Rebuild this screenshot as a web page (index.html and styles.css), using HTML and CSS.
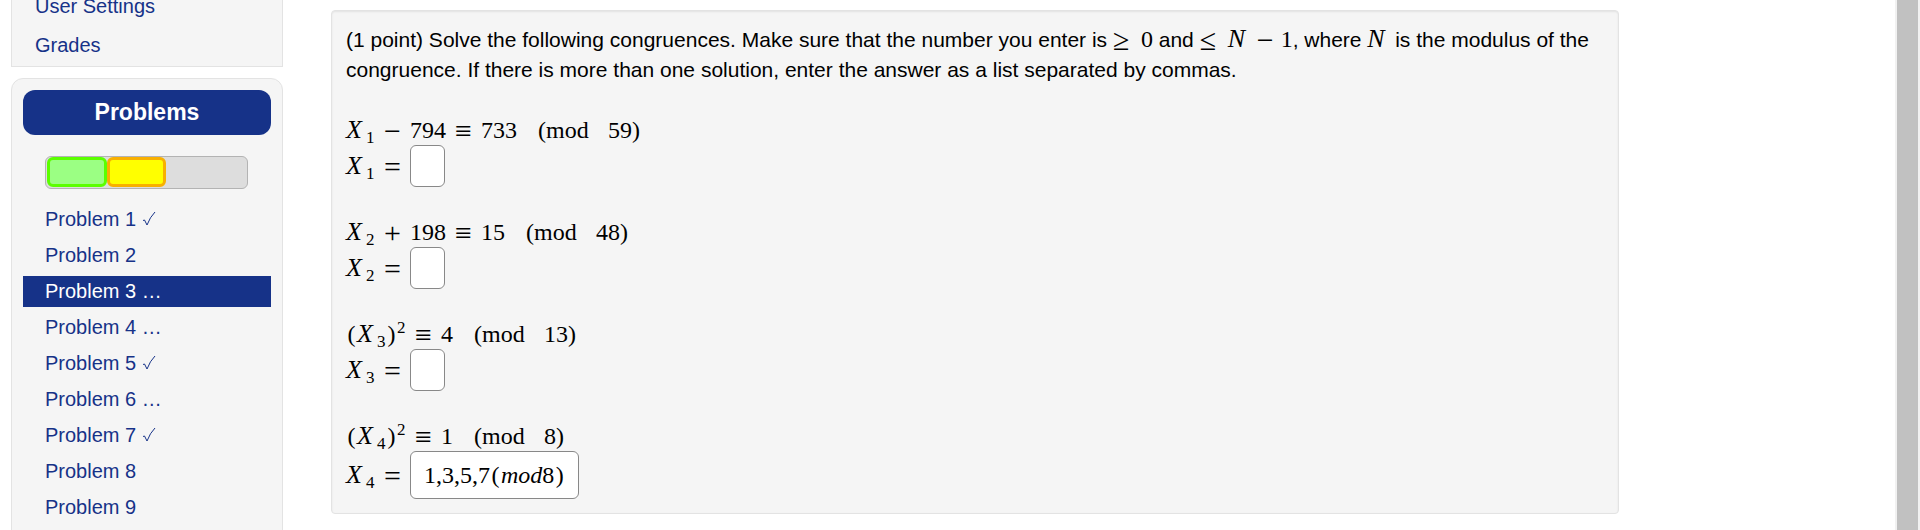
FILE: index.html
```html
<!DOCTYPE html>
<html lang="en">
<head>
<meta charset="utf-8">
<title>Problem 3</title>
<link rel="stylesheet" href="styles.css">
</head>
<body>
<div class="page">
  <aside class="sidebar">
    <nav class="panel menu" aria-label="Main menu">
      <a href="#">User Settings</a>
      <a href="#">Grades</a>
    </nav>
    <nav class="panel problems" aria-label="Problems">
      <h2 class="panel-title">Problems</h2>
      <div class="progress"><span class="done"></span><span class="partial"></span></div>
      <ul class="problem-list">
        <li><a href="#">Problem 1 <svg class="check" viewBox="0 0 14 16"><path d="M1 9.5 2.5 9 5 14Q8 6 13 1"/></svg></a></li>
        <li><a href="#">Problem 2</a></li>
        <li><a href="#" class="active">Problem 3 …</a></li>
        <li><a href="#">Problem 4 …</a></li>
        <li><a href="#">Problem 5 <svg class="check" viewBox="0 0 14 16"><path d="M1 9.5 2.5 9 5 14Q8 6 13 1"/></svg></a></li>
        <li><a href="#">Problem 6 …</a></li>
        <li><a href="#">Problem 7 <svg class="check" viewBox="0 0 14 16"><path d="M1 9.5 2.5 9 5 14Q8 6 13 1"/></svg></a></li>
        <li><a href="#">Problem 8</a></li>
        <li><a href="#">Problem 9</a></li>
      </ul>
    </nav>
  </aside>
  <main class="content">
    <form class="problem">
      <p class="statement">(1 point) Solve the following congruences. Make sure that the number you enter is <span class="math"><span class="cmp">≥</span>0</span> and <span class="math"><span class="cmp">≤</span><i class="var">N</i><span class="minus">−</span>1</span>, where <span class="math"><i class="var">N</i></span> is the modulus of the congruence. If there is more than one solution, enter the answer as a list separated by commas.</p>

      <div class="question">
        <div class="math equation"><i class="var">X</i><sub>1</sub><span class="op">−</span>794<span class="op">≡</span>733<span class="mod">(<span class="word">mod</span>59)</span></div>
        <div class="answer"><label class="math" for="x1"><i class="var">X</i><sub>1</sub><span class="op">=</span></label><input class="math field" id="x1" type="text"></div>
      </div>
      <div class="question">
        <div class="math equation"><i class="var">X</i><sub>2</sub><span class="op">+</span>198<span class="op">≡</span>15<span class="mod">(<span class="word">mod</span>48)</span></div>
        <div class="answer"><label class="math" for="x2"><i class="var">X</i><sub>2</sub><span class="op">=</span></label><input class="math field" id="x2" type="text"></div>
      </div>
      <div class="question">
        <div class="math equation"><span class="paren">(</span><i class="var">X</i><sub>3</sub><span class="paren">)</span><sup>2</sup><span class="op">≡</span>4<span class="mod">(<span class="word">mod</span>13)</span></div>
        <div class="answer"><label class="math" for="x3"><i class="var">X</i><sub>3</sub><span class="op">=</span></label><input class="math field" id="x3" type="text"></div>
      </div>
      <div class="question">
        <div class="math equation"><span class="paren">(</span><i class="var">X</i><sub>4</sub><span class="paren">)</span><sup>2</sup><span class="op">≡</span>1<span class="mod">(<span class="word">mod</span>8)</span></div>
        <div class="answer"><span class="math" id="x4-label"><i class="var">X</i><sub>4</sub><span class="op">=</span></span><span class="math field filled" role="textbox" contenteditable="true" aria-labelledby="x4-label">1,3,5,7<span class="paren">(</span><i>mod</i>8<span class="paren">)</span></span></div>
      </div>
    </form>
  </main>
  <div class="scrollbar"></div>
</div>
</body>
</html>
```
FILE: styles.css
```css
* { box-sizing: border-box; }

body {
  margin: 0;
  background: #fff;
  color: #000;
  font-family: "Liberation Sans", Arial, sans-serif;
  font-size: 20px;
  line-height: 30px;
}

.page {
  display: grid;
  grid-template-columns: 272px minmax(0, 1fr) 25px;
  column-gap: 48px;
  height: 100vh;
  padding-left: 11px;
  overflow: hidden;
}

.sidebar {
  display: flex;
  flex-direction: column;
  gap: 11px;
  margin-top: -13px;
}

.panel {
  background: #f5f5f5;
  border: 1px solid #e3e3e3;
}

.panel a {
  color: #163288;
  text-decoration: none;
}

.menu {
  border-top: 0;
  padding-bottom: 1px;
}

.menu a {
  display: block;
  padding: 0 23px;
  line-height: 39px;
}

.problems {
  border-radius: 12px;
  padding: 11px 11px 24px;
}

.panel-title {
  margin: 0 0 21px;
  border-radius: 12px;
  background: #163288;
  color: #fff;
  font-size: 23px;
  line-height: 45px;
  text-align: center;
}

.progress {
  display: flex;
  height: 33px;
  margin: 0 23px 15px 22px;
  padding: 0 1px 1px;
  border: 1px solid #b3b3b3;
  border-radius: 6px;
  background: #ddd;
}

.progress span {
  width: 30%;
  border: 3px solid;
  border-radius: 6px;
}

.progress .done { background: #9bff83; border-color: #5bff00; }
.progress .partial { background: #ff0; border-color: #f8b000; }

.problem-list {
  display: grid;
  gap: 5px;
  margin: 0;
  padding: 0;
  list-style: none;
}

.problem-list a {
  display: block;
  padding: 0 22px;
  line-height: 31px;
}

.problem-list .active {
  background: #163288;
  color: #fff;
}

.check {
  width: 14px;
  height: 16px;
  vertical-align: -1px;
  fill: none;
  stroke: currentColor;
}

.content {
  padding: 10px 228px 0 0;
}

.problem {
  display: flex;
  flex-direction: column;
  gap: 30px;
  padding: 14px;
  border: 1px solid #e3e3e3;
  border-radius: 4px;
  background: #f5f5f5;
  box-shadow: inset 0 1px 2px rgba(0, 0, 0, 0.08);
}

.statement {
  margin: 0;
  font-size: 21px;
}

.math {
  font-family: "Liberation Serif", "Times New Roman", serif;
  font-size: 24px;
}

.statement .math { line-height: 24px; }

.math span, .var { display: inline-block; }

.math .var {
  width: 20px;
  font-size: 26px;
  line-height: 24px;
}

.statement .var { width: 22px; }

.math sub, .math sup {
  display: inline-block;
  width: 9px;
  font-size: 17px;
  line-height: 8px;
}

.math sub { vertical-align: -5px; }
.math sup { vertical-align: 9px; }

.math .op, .math .cmp, .math .minus {
  font-size: 30px;
  line-height: 20px;
  text-align: center;
  vertical-align: -3px;
}

.math .op { width: 35px; }
.math .cmp { width: 28px; text-align: left; }
.math .minus { width: 31px; }
.math .paren { width: 11px; text-align: center; }

.math .mod { padding-left: 21px; }
.math .word { width: 62px; }

.equation {
  height: 30px;
  line-height: 30px;
  white-space: nowrap;
}

.answer {
  display: flex;
  align-items: center;
}

.field {
  width: 35px;
  height: 42px;
  padding: 0 8px;
  border: 1px solid #888;
  border-radius: 6px;
  background: #fff;
  color: #000;
}

.filled {
  width: auto;
  height: 48px;
  padding: 0 13px;
  line-height: 46px;
}

.scrollbar {
  border: solid #f1f1f1;
  border-width: 0 2px;
  background: #c1c1c1;
}
```
